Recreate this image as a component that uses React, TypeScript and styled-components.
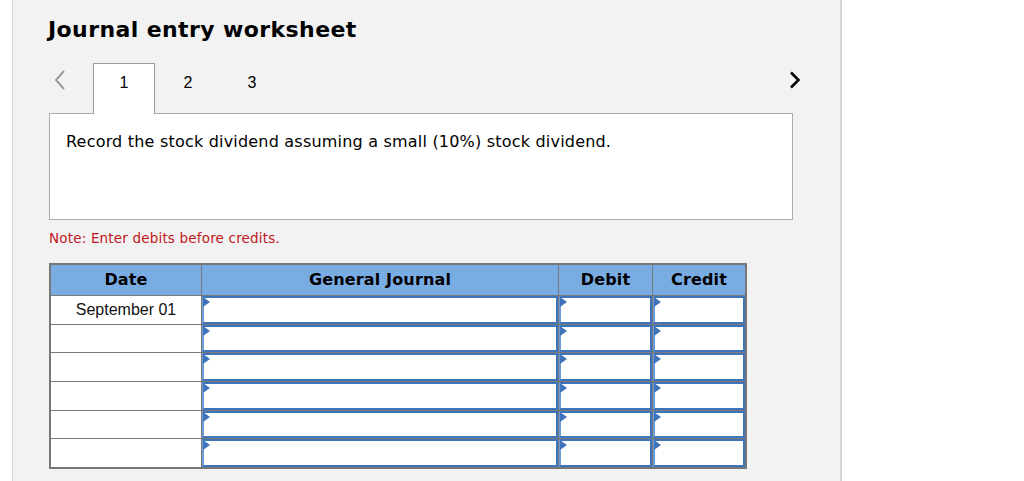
import React from "react";
import styled, { createGlobalStyle } from "styled-components";

const GlobalStyle = createGlobalStyle`
  html, body {
    margin: 0;
    padding: 0;
    background: #ffffff;
  }
  body {
    font-family: "DejaVu Sans", Verdana, sans-serif;
  }
`;

const Page = styled.div`
  display: flex;
  height: 481px;
  overflow: hidden;
`;

const Panel = styled.div`
  margin-left: 12px;
  width: 830px;
  background: #f2f2f2;
  border-left: 1px solid #d6d6d6;
  border-right: 2px solid #d4d4d4;
  padding: 15px 0 0 36px;
  box-sizing: border-box;
`;

const Title = styled.h1`
  margin: 0;
  font-family: "DejaVu Sans", Verdana, sans-serif;
  font-weight: bold;
  font-size: 22px;
  letter-spacing: 0.4px;
  color: #000;
  line-height: 30px;
  margin-left: -1px;
`;

const TabRow = styled.div`
  display: flex;
  align-items: flex-end;
  width: 752px;
  margin-top: 17px;
  height: 51px;
`;

const Chevron = styled.div<{ $dark?: boolean }>`
  align-self: flex-start;
  margin-top: ${(p) => (p.$dark ? "9px" : "8px")};
  width: 44px;
  display: flex;
  justify-content: ${(p) => (p.$dark ? "flex-end" : "flex-start")};
  padding-left: ${(p) => (p.$dark ? "0" : "5px")};
  box-sizing: border-box;
`;

const Tab = styled.div<{ $active?: boolean }>`
  width: 62px;
  height: 51px;
  box-sizing: border-box;
  display: flex;
  align-items: center;
  justify-content: center;
  padding-bottom: 13px;
  font-family: "Liberation Sans", Arial, sans-serif;
  font-size: 16px;
  color: #000;
  position: relative;
  z-index: 1;
  margin-bottom: -1px;
  background: ${(p) => (p.$active ? "#ffffff" : "transparent")};
  border: 1px solid ${(p) => (p.$active ? "#9a9a9a" : "transparent")};
  border-bottom: none;
  margin-right: 2px;
`;

const Spacer = styled.div`
  flex: 1;
`;

const Prompt = styled.div`
  width: 744px;
  height: 107px;
  box-sizing: border-box;
  background: #fff;
  border: 1px solid #ababab;
  padding: 18px 16px 16px;
  font-size: 16px;
  letter-spacing: 0.2px;
  color: #000;
  line-height: 20px;
`;

const Note = styled.div`
  margin-top: 10px;
  font-size: 13.5px;
  letter-spacing: 0.18px;
  color: #c0171c;
  line-height: 17px;
`;

const Table = styled.table`
  margin-top: 16px;
  border-collapse: collapse;
  border: 2px solid #777;
  table-layout: fixed;
  width: 691px;
`;

const HeadCell = styled.th<{ $w: number }>`
  width: ${(p) => p.$w}px;
  height: 30px;
  padding: 0;
  line-height: 18px;
  background: #7aace4;
  border: 1px solid #7a7a7a;
  font-family: "DejaVu Sans", Verdana, sans-serif;
  font-weight: bold;
  font-size: 16px;
  letter-spacing: 0.15px;
  color: #000;
  text-align: center;
`;

const DateCell = styled.td`
  height: 27.7px;
  padding: 0;
  background: #fff;
  border: 1px solid #7a7a7a;
  font-family: "Liberation Sans", Arial, sans-serif;
  font-size: 16px;
  color: #111;
  text-align: center;
`;

const InputCell = styled.td`
  height: 27.7px;
  padding: 0;
  background: #fff;
  border: 1px solid #7a7a7a;
`;

const InputBox = styled.div`
  position: relative;
  height: 27.7px;
  box-sizing: border-box;
  background: #fff;
  border: 2px solid #3f73ba;
  border-left-color: #6c9cd8;
  &::before {
    content: "";
    position: absolute;
    top: -1px;
    left: -1px;
    border-top: 5px solid transparent;
    border-bottom: 5px solid transparent;
    border-left: 7px solid #3f73ba;
  }
`;

const rows = ["September 01", "", "", "", "", ""];

export default function App() {
  return (
    <Page>
      <GlobalStyle />
      <Panel>
        <Title>Journal entry worksheet</Title>
        <TabRow>
          <Chevron>
            <svg width="12" height="20" viewBox="0 0 12 20">
              <path d="M10 1 L2 10 L10 19" fill="none" stroke="#9c9c9c" strokeWidth="2" />
            </svg>
          </Chevron>
          <Tab $active>1</Tab>
          <Tab>2</Tab>
          <Tab>3</Tab>
          <Spacer />
          <Chevron $dark>
            <svg width="12" height="18" viewBox="0 0 12 18">
              <path d="M2 1.5 L9.5 9 L2 16.5" fill="none" stroke="#000" strokeWidth="2.5" />
            </svg>
          </Chevron>
        </TabRow>
        <Prompt>Record the stock dividend assuming a small (10%) stock dividend.</Prompt>
        <Note>Note: Enter debits before credits.</Note>
        <Table>
          <thead>
            <tr>
              <HeadCell $w={150}>Date</HeadCell>
              <HeadCell $w={356}>General Journal</HeadCell>
              <HeadCell $w={93}>Debit</HeadCell>
              <HeadCell $w={92}>Credit</HeadCell>
            </tr>
          </thead>
          <tbody>
            {rows.map((d, i) => (
              <tr key={i}>
                <DateCell>{d}</DateCell>
                <InputCell><InputBox /></InputCell>
                <InputCell><InputBox /></InputCell>
                <InputCell><InputBox /></InputCell>
              </tr>
            ))}
          </tbody>
        </Table>
      </Panel>
    </Page>
  );
}
